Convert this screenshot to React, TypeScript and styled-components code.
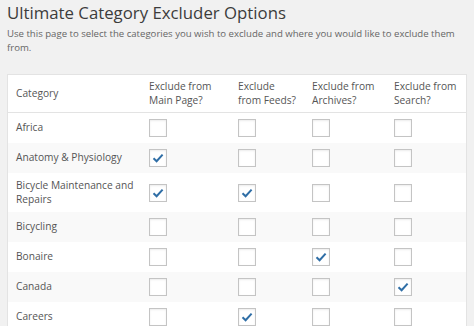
import styled, { createGlobalStyle } from 'styled-components';

const GlobalStyle = createGlobalStyle`
  html, body {
    margin: 0;
    padding: 0;
    background: #f1f1f1;
  }
  body {
    font-family: "Open Sans", "Liberation Sans", sans-serif;
    color: #555;
  }
`;

const Page = styled.div`
  padding: 0 9px 0 7px;
  width: 474px;
  box-sizing: border-box;
  overflow: hidden;
  height: 326px;
`;

const Title = styled.h1`
  margin: 0;
  padding-top: 1px;
  font-size: 16.8px;
  line-height: 24px;
  font-weight: 400;
  color: #3c3c3c;
`;

const Intro = styled.p`
  margin: 2px 0 19px;
  font-size: 9.6px;
  line-height: 14px;
  color: #666;
`;

const Table = styled.table`
  width: 458px;
  border-collapse: collapse;
  background: #fff;
  border: 1px solid #e3e3e3;
  table-layout: fixed;
`;

const HeadCell = styled.th<{ $width: number; $first?: boolean }>`
  width: ${p => p.$width}px;
  text-align: left;
  font-weight: 400;
  font-size: 10.2px;
  line-height: 14px;
  color: #555;
  padding: 4px ${p => (p.$first ? 1 : 8)}px 5px 8px;
  border-bottom: 1px solid #e3e3e3;
  vertical-align: middle;
`;

const Row = styled.tr<{ $striped: boolean }>`
  background: ${p => (p.$striped ? '#f9f9f9' : '#fff')};
`;

const Cell = styled.td<{ $first?: boolean }>`
  font-size: 10.2px;
  line-height: 13.5px;
  color: #555;
  padding: 6px ${p => (p.$first ? 1 : 8)}px 6px 8px;
  vertical-align: middle;
`;

const Box = styled.span`
  display: flex;
  align-items: center;
  justify-content: center;
  width: 18px;
  height: 18px;
  box-sizing: border-box;
  border: 1px solid #c4c4c4;
  background: #fff;
  box-shadow: inset 0 1px 2px rgba(0, 0, 0, 0.08);
`;

const Tick = () => (
  <svg width="12" height="10" viewBox="0 0 12 10">
    <path d="M1.5 5.2 L4.6 8.2 L10.6 1.6" fill="none" stroke="#2f6ea6" strokeWidth="2" />
  </svg>
);

type Category = { name: string; checks: boolean[] };

const categories: Category[] = [
  { name: 'Africa', checks: [false, false, false, false] },
  { name: 'Anatomy & Physiology', checks: [true, false, false, false] },
  { name: 'Bicycle Maintenance and Repairs', checks: [true, true, false, false] },
  { name: 'Bicycling', checks: [false, false, false, false] },
  { name: 'Bonaire', checks: [false, false, true, false] },
  { name: 'Canada', checks: [false, false, false, true] },
  { name: 'Careers', checks: [false, true, false, false] },
];

// content widths; cells add 16px of padding (9px for the first column)
const columns = [
  { label: 'Category', width: 124 },
  { label: 'Exclude from Main Page?', width: 73 },
  { label: 'Exclude from Feeds?', width: 58 },
  { label: 'Exclude from Archives?', width: 66 },
  { label: 'Exclude from Search?', width: 64 },
];

export default function App() {
  return (
    <Page>
      <GlobalStyle />
      <Title>Ultimate Category Excluder Options</Title>
      <Intro>
        Use this page to select the categories you wish to exclude and where you would like to exclude them
        from.
      </Intro>
      <Table>
        <thead>
          <tr>
            {columns.map((c, i) => (
              <HeadCell key={c.label} $width={c.width} $first={i === 0}>
                {c.label === 'Exclude from Feeds?' ? (
                  <>
                    Exclude
                    <br />
                    from Feeds?
                  </>
                ) : (
                  c.label
                )}
              </HeadCell>
            ))}
          </tr>
        </thead>
        <tbody>
          {categories.map((cat, i) => (
            <Row key={cat.name} $striped={i % 2 === 1}>
              <Cell $first>{cat.name}</Cell>
              {cat.checks.map((on, j) => (
                <Cell key={j}>
                  <Box>{on && <Tick />}</Box>
                </Cell>
              ))}
            </Row>
          ))}
        </tbody>
      </Table>
    </Page>
  );
}
